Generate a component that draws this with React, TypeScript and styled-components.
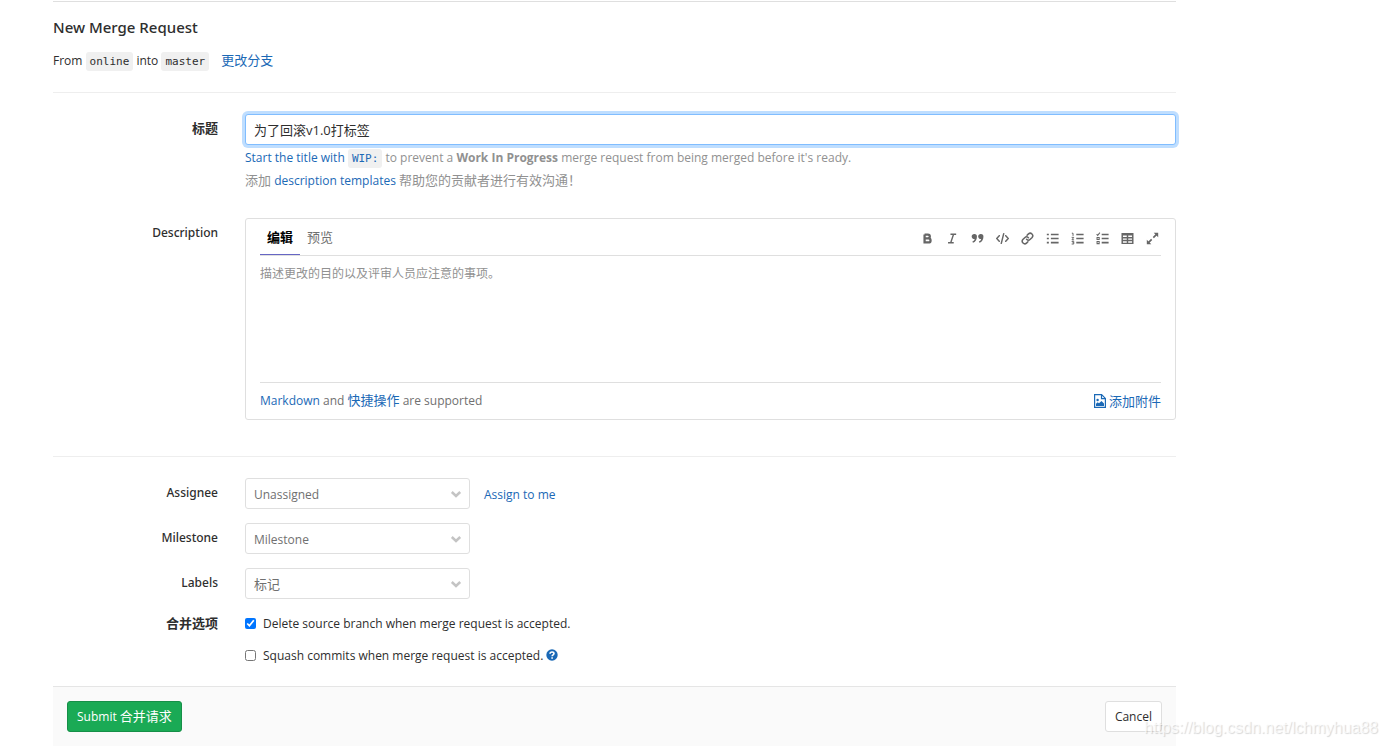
import React from 'react';
import styled, { createGlobalStyle } from 'styled-components';

const GlobalStyle = createGlobalStyle`
  *, *::before, *::after { box-sizing: border-box; }
  body {
    margin: 0;
    background: #fff;
    color: #2e2e2e;
    font-family: 'Open Sans', 'Noto Sans CJK SC', sans-serif;
    font-size: 12px;
    line-height: 20px;
  }
  button, input, select, textarea { font: inherit; color: inherit; margin: 0; }
`;

const Page = styled.main`
  position: relative;
  padding: 1px 211px 0 53px;
`;

const Header = styled.header`
  display: flex;
  flex-direction: column;
  gap: 14px;
  height: 92px;
  padding-top: 15px;
  border-top: 1px solid #dfdfdf;
  border-bottom: 1px solid #eee;
`;

const Heading = styled.h1`
  margin: 0;
  font-family: 'Noto Sans', sans-serif;
  font-size: 15px;
  font-weight: 500;
  line-height: 20px;
`;

const Branches = styled.p`
  margin: 0;
`;

const Code = styled.code`
  padding: 3px 4px;
  border-radius: 3px;
  background: #f0f0f0;
  font-family: 'DejaVu Sans Mono', monospace;
  font-size: 11px;
  line-height: 1;
`;

const Link = styled.a`
  color: #1b69b6;
  text-decoration: none;
  &:hover { text-decoration: underline; }
`;

const Han = styled.span`
  font-size: 13px;
  line-height: 1;
`;

const ChangeLink = styled(Link)`
  margin-left: 12px;
`;

const Section = styled.section`
  display: flex;
  flex-direction: column;
  border-bottom: 1px solid #eee;
`;

const MainSection = styled(Section)`
  gap: 27px;
  padding: 21px 0 36px;
`;

const MetaSection = styled(Section)`
  gap: 14px;
  padding: 21px 0 21px;
  border-bottom-color: #e5e5e5;
`;

const Row = styled.div`
  display: grid;
  grid-template-columns: 165px minmax(0, 1fr);
  column-gap: 27px;
  align-items: start;
`;

const Label = styled.label<{ $han?: boolean }>`
  padding-top: ${p => (p.$han ? '4px' : '5px')};
  font-family: 'Noto Sans', 'Noto Sans CJK SC', sans-serif;
  text-align: right;
  font-size: ${p => (p.$han ? '13px' : '12px')};
  font-weight: ${p => (p.$han ? 700 : 500)};
`;

const GroupLabel = styled.span`
  font-size: 13px;
  font-weight: 700;
  text-align: right;
`;

const TitleInput = styled.input`
  display: block;
  width: 100%;
  height: 31px;
  padding: 5px 8px;
  border: 1px solid #80bdff;
  border-radius: 3px;
  outline: none;
  box-shadow: 0 0 0 3px #bfdeff;
  font-size: 13px;
`;

const Help = styled.p`
  margin: 3px 0 0;
  color: #919191;
`;

const Editor = styled.div`
  height: 202px;
  padding: 0 14px;
  border: 1px solid #dfdfdf;
  border-radius: 3px;
`;

const EditorBar = styled.div`
  display: flex;
  justify-content: space-between;
  align-items: stretch;
  height: 37px;
  border-bottom: 1px solid #dfdfdf;
`;

const Tabs = styled.div`
  display: flex;
`;

const Tab = styled.button<{ $active?: boolean }>`
  padding: 0 7px;
  border: 0;
  border-bottom: 1px solid ${p => (p.$active ? '#6666c4' : 'transparent')};
  background: none;
  color: ${p => (p.$active ? '#000' : '#707070')};
  font-size: 13px;
  font-weight: ${p => (p.$active ? 700 : 400)};
`;

const Tools = styled.div`
  display: flex;
  align-items: center;
  gap: 8px;
  padding-top: 3px;
`;

const Tool = styled.button`
  display: flex;
  padding: 1px 2px;
  border: 0;
  background: none;
  color: #666;
`;

const Textarea = styled.textarea`
  display: block;
  width: 100%;
  height: 126px;
  padding: 8px 0;
  border: 0;
  outline: none;
  resize: none;
  &::placeholder { color: #919191; opacity: 1; }
`;

const EditorFoot = styled.div`
  display: flex;
  justify-content: space-between;
  align-items: center;
  height: 36px;
  border-top: 1px solid #dfdfdf;
  color: #707070;
`;

const AttachButton = styled.button`
  display: flex;
  align-items: center;
  gap: 3px;
  padding: 0;
  border: 0;
  background: none;
  color: #1b69b6;
  font-size: 13px;
`;

const PickerLine = styled.div`
  display: flex;
  align-items: center;
  gap: 14px;
`;

const AssignLink = styled(Link)`
  padding-top: 2px;
`;

const Picker = styled.div`
  display: grid;
  width: 225px;
  align-items: center;
  & > * { grid-area: 1 / 1; }
  & > svg { justify-self: end; margin-right: 8px; pointer-events: none; }
`;

const Select = styled.select<{ $han?: boolean }>`
  width: 100%;
  height: 31px;
  padding: ${p => (p.$han ? '0' : '2px')} 24px 0 8px;
  border: 1px solid #dfdfdf;
  border-radius: 3px;
  appearance: none;
  background: #fff;
  color: #707070;
  font-size: ${p => (p.$han ? '13px' : '12px')};
`;

const Options = styled.div`
  display: flex;
  flex-direction: column;
  gap: 12px;
`;

const Option = styled.div`
  display: flex;
  align-items: center;
`;

const OptionLabel = styled.label`
  padding-top: 2px;
  line-height: 18px;
`;

const Check = styled.input`
  width: 11px;
  height: 11px;
  margin-right: 7px;
  accent-color: #0075ff;
`;

const HelpLink = styled(Link)`
  display: flex;
  margin-left: 3px;
`;

const Actions = styled.footer`
  display: flex;
  justify-content: space-between;
  padding: 14px;
  background: #fafafa;
`;

const Button = styled.button<{ $primary?: boolean }>`
  height: 31px;
  padding: 0 9px;
  border: 1px solid ${p => (p.$primary ? '#168f48' : '#dfdfdf')};
  border-radius: 3px;
  background: ${p => (p.$primary ? '#1aaa55' : '#fff')};
  color: ${p => (p.$primary ? '#fff' : '#2e2e2e')};
`;

const Watermark = styled.span`
  position: absolute;
  right: 9px;
  bottom: 8px;
  color: rgba(255, 255, 255, 0.7);
  font-family: 'Liberation Sans', sans-serif;
  font-size: 16px;
  text-shadow: 1px 1px 1px rgba(0, 0, 0, 0.16);
  pointer-events: none;
`;

const line = { fill: 'none', stroke: 'currentColor', strokeWidth: 2 } as const;

const tools: { name: string; art: React.ReactNode }[] = [
  { name: 'Bold', art: <path {...line} strokeWidth={2.8} d="M4.4 3.1h4.1a2.3 2.3 0 0 1 0 4.7H4.6m0 0h4.6a2.5 2.5 0 0 1 0 5.1H4.4V3" /> },
  { name: 'Italic', art: <path {...line} strokeWidth={1.7} d="M5.5 2.8h7M2.5 13.2h7M9.2 3 5.9 13" /> },
  { name: 'Quote', art: <path fill="currentColor" d="M4 2.5a3.2 3.2 0 0 1 3.3 3.3c0 3.7-1.8 6.4-4.9 7.5l-.7-1.5c1.7-.8 2.6-1.8 2.8-3.2A3.1 3.1 0 0 1 .8 5.6C.8 3.8 2.2 2.5 4 2.5zm8 0a3.2 3.2 0 0 1 3.3 3.3c0 3.7-1.8 6.4-4.9 7.5l-.7-1.5c1.7-.8 2.6-1.8 2.8-3.2a3.1 3.1 0 0 1-3.7-3C8.8 3.8 10.2 2.5 12 2.5z" /> },
  { name: 'Code', art: <path {...line} strokeWidth={1.8} strokeLinecap="round" d="M4 4.5.8 8 4 11.5M12 4.5 15.2 8 12 11.5M9.5 2 6.5 14" /> },
  { name: 'Link', art: <path {...line} strokeWidth={1.9} strokeLinecap="round" d="m7.5 4 1.7-1.7a3.2 3.2 0 0 1 4.5 4.5L11.4 9a3.2 3.2 0 0 1-4.5 0M8.5 12l-1.7 1.7a3.2 3.2 0 0 1-4.5-4.5L4.6 7a3.2 3.2 0 0 1 4.5 0" /> },
  { name: 'Bulleted list', art: <path {...line} d="M1 3h2.5M1 8h2.5M1 13h2.5M6 3h9.5M6 8h9.5M6 13h9.5" /> },
  { name: 'Numbered list', art: <><path {...line} d="M6.5 3h9M6.5 8h9M6.5 13h9" /><path {...line} strokeWidth={1.2} d="M1 1.5h1.5v3.3M.8 6.6h2.6L1.2 9.6h2.6M.8 11.6h2.6v3.2H.8m1-1.6h1.6" /></> },
  { name: 'Task list', art: <><path {...line} d="M7 3h8.5M7 8h8.5M7 13h8.5" /><path {...line} strokeWidth={1.3} d="m.8 2.6 1.3 1.6L4.8.8M1.3 6.8h2.6v2.5H1.3zM1.3 11.8h2.6v2.5H1.3z" /></> },
  { name: 'Table', art: <path {...line} strokeWidth={1.8} d="M1.5 2h13v12h-13zM1 3.500h14M1 7h14M1 10.5h14M8 4v10" /> },
  { name: 'Full screen', art: <><path {...line} d="M9 7 13 3M7 9 3 13" /><path fill="currentColor" d="M9.5 1H15v5.5zM1 9.5V15h5.5z" /></> },
];

const Chevron = () => (
  <svg width="12" height="12" viewBox="0 0 12 12" aria-hidden="true">
    <path d="M1.8 4 6 8l4.2-4" fill="none" stroke="#c4c4c4" strokeWidth="2.5" />
  </svg>
);

const ImageFileIcon = () => (
  <svg width="12" height="14" viewBox="0 0 12 14" aria-hidden="true">
    <path d="M.6.6h7L11.4 4.4v9H.6zM7.5.6v4h4" fill="none" stroke="currentColor" strokeWidth="1.2" />
    <path d="M2 12V9.8l1.7-1.6 1.3 1L7.5 7 10 9.5V12z" fill="currentColor" />
    <circle cx="3.6" cy="6" r="1.2" fill="currentColor" />
  </svg>
);

const QuestionIcon = () => (
  <svg width="12" height="12" viewBox="0 0 12 12" aria-hidden="true">
    <circle cx="6" cy="6" r="5.7" fill="currentColor" />
    <path d="M4 4.7c.1-2.4 4-2.3 4-.1C8 6 6.1 5.8 6.1 7.3M6.1 8.2v1.6" fill="none" stroke="#fff" strokeWidth="1.6" />
  </svg>
);

export default function App() {
  return (
    <>
      <GlobalStyle />
      <Page>
        <Header>
          <Heading>New Merge Request</Heading>
          <Branches>
            From <Code>online</Code> into <Code>master</Code>
            <ChangeLink href="#branches"><Han>更改分支</Han></ChangeLink>
          </Branches>
        </Header>
        <form onSubmit={e => e.preventDefault()}>
          <MainSection>
            <Row>
              <Label $han htmlFor="title">标题</Label>
              <div>
                <TitleInput id="title" type="text" defaultValue="为了回滚v1.0打标签" />
                <Help>
                  <Link href="#wip">Start the title with <Code>WIP:</Code></Link> to prevent a{' '}
                  <strong>Work In Progress</strong> merge request from being merged before it's ready.
                </Help>
                <Help>
                  <Han>添加</Han> <Link href="#templates">description templates</Link>{' '}
                  <Han>帮助您的贡献者进行有效沟通！</Han>
                </Help>
              </div>
            </Row>
            <Row>
              <Label htmlFor="description">Description</Label>
              <Editor>
                <EditorBar>
                  <Tabs>
                    <Tab type="button" $active>编辑</Tab>
                    <Tab type="button">预览</Tab>
                  </Tabs>
                  <Tools>
                    {tools.map(t => (
                      <Tool key={t.name} type="button" aria-label={t.name}>
                        <svg width="13" height="13" viewBox="0 0 16 16" aria-hidden="true">{t.art}</svg>
                      </Tool>
                    ))}
                  </Tools>
                </EditorBar>
                <Textarea id="description" placeholder="描述更改的目的以及评审人员应注意的事项。" />
                <EditorFoot>
                  <span>
                    <Link href="#markdown">Markdown</Link> and{' '}
                    <Link href="#quick-actions"><Han>快捷操作</Han></Link> are supported
                  </span>
                  <AttachButton type="button"><ImageFileIcon />添加附件</AttachButton>
                </EditorFoot>
              </Editor>
            </Row>
          </MainSection>
          <MetaSection>
            <Row>
              <Label htmlFor="assignee">Assignee</Label>
              <PickerLine>
                <Picker>
                  <Select id="assignee"><option>Unassigned</option></Select>
                  <Chevron />
                </Picker>
                <AssignLink href="#assign">Assign to me</AssignLink>
              </PickerLine>
            </Row>
            <Row>
              <Label htmlFor="milestone">Milestone</Label>
              <Picker>
                <Select id="milestone"><option>Milestone</option></Select>
                <Chevron />
              </Picker>
            </Row>
            <Row>
              <Label htmlFor="labels">Labels</Label>
              <Picker>
                <Select id="labels" $han><option>标记</option></Select>
                <Chevron />
              </Picker>
            </Row>
            <Row>
              <GroupLabel id="merge-options">合并选项</GroupLabel>
              <Options role="group" aria-labelledby="merge-options">
                <Option>
                  <Check id="delete-branch" type="checkbox" defaultChecked />
                  <OptionLabel htmlFor="delete-branch">Delete source branch when merge request is accepted.</OptionLabel>
                </Option>
                <Option>
                  <Check id="squash" type="checkbox" />
                  <OptionLabel htmlFor="squash">Squash commits when merge request is accepted.</OptionLabel>
                  <HelpLink href="#squash-help" aria-label="About squashing"><QuestionIcon /></HelpLink>
                </Option>
              </Options>
            </Row>
          </MetaSection>
          <Actions>
            <Button type="submit" $primary>Submit <Han>合并请求</Han></Button>
            <Button type="button">Cancel</Button>
          </Actions>
        </form>
        <Watermark>https://blog.csdn.net/lchmyhua88</Watermark>
      </Page>
    </>
  );
}
